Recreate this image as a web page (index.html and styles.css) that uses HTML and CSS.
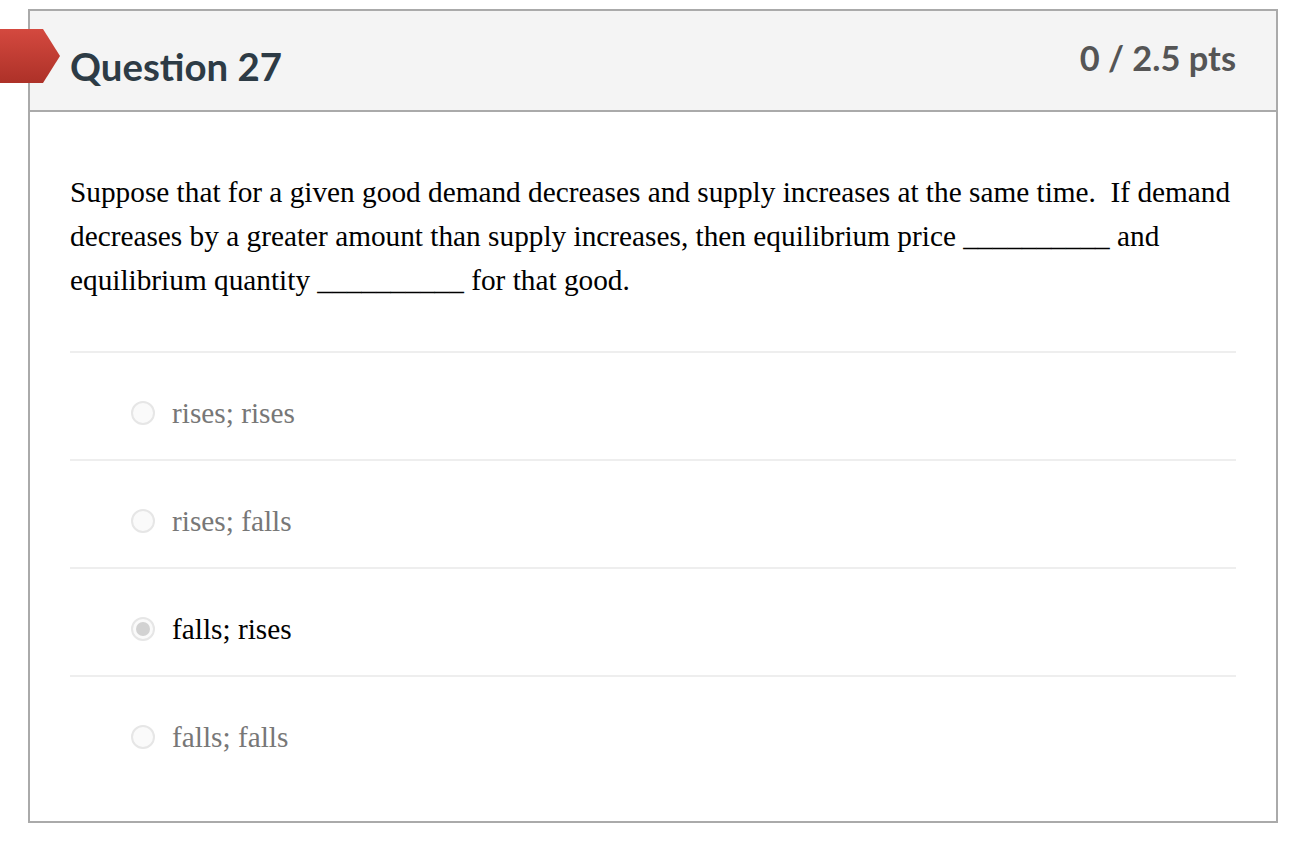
FILE: index.html
```html
<!DOCTYPE html>
<html>
<head>
<meta charset="utf-8">
<link rel="stylesheet" href="styles.css">
</head>
<body>
<div class="page">
  <svg class="flag" width="62" height="54" viewBox="0 0 62 54">
    <defs>
      <linearGradient id="fg" x1="0" y1="0" x2="0" y2="1">
        <stop offset="0" stop-color="#d4493f"/>
        <stop offset="1" stop-color="#ad3128"/>
      </linearGradient>
    </defs>
    <polygon points="0,0 43,0 60,27 43,54 0,54" fill="url(#fg)"/>
  </svg>
  <div class="question">
    <div class="q-header">
      <h2 class="q-title">Question 27</h2>
      <div class="q-pts">0 / 2.5 pts</div>
    </div>
    <div class="q-body">
      <p class="q-text">Suppose that for a given good demand decreases and supply increases at the same time.&nbsp; If demand decreases by a greater amount than supply increases, then equilibrium price __________ and equilibrium quantity __________ for that good.</p>
      <div class="answers">
        <div class="answer"><span class="radio"></span><span class="label">rises; rises</span></div>
        <div class="answer"><span class="radio"></span><span class="label">rises; falls</span></div>
        <div class="answer selected"><span class="radio"></span><span class="label">falls; rises</span></div>
        <div class="answer"><span class="radio"></span><span class="label">falls; falls</span></div>
      </div>
    </div>
  </div>
</div>
</body>
</html>
```
FILE: styles.css
```css
html, body {
  margin: 0;
  padding: 0;
  background: #ffffff;
}
.page {
  position: relative;
  padding: 9px 16px 0 28px;
  width: 1250px;
}
.flag {
  position: absolute;
  left: 0;
  top: 29px;
  display: block;
}
.question {
  border: 2px solid #aaaaaa;
  background: #fff;
}
.q-header {
  background: #f4f4f4;
  border-bottom: 2px solid #aaaaaa;
  height: 99px;
  display: flex;
  justify-content: space-between;
  align-items: flex-start;
  padding: 0 40px;
  font-family: Lato, "Open Sans", sans-serif;
  font-weight: bold;
}
.q-title {
  margin: 0;
  margin-top: 33px;
  font-size: 38.4px;
  line-height: 44px;
  color: #2d3b45;
  font-weight: bold;
}
.q-pts {
  margin-top: 27px;
  font-size: 34.4px;
  line-height: 40px;
  color: #555555;
}
.q-body {
  padding: 58px 40px 38px 40px;
}
.q-text {
  margin: 0 0 49px 0;
  font-family: "Liberation Serif", "Times New Roman", serif;
  font-size: 29.3px;
  line-height: 44px;
  color: #000;
}
.answers {
  display: flex;
  flex-direction: column;
}
.answer {
  border-top: 2px solid #eeeeee;
  display: flex;
  align-items: center;
  padding-left: 61px;
  padding-top: 14px;
  box-sizing: border-box;
  height: 108px;
}
.radio {
  width: 20px;
  height: 20px;
  border-radius: 50%;
  border: 2px solid #e6e6e6;
  background: #fafafa;
  margin-right: 17px;
  display: flex;
  align-items: center;
  justify-content: center;
  flex: none;
}
.answer.selected .radio::after {
  content: "";
  width: 14px;
  height: 14px;
  border-radius: 50%;
  background: #d2d2d2;
}
.label {
  font-family: "Liberation Serif", "Times New Roman", serif;
  font-size: 29.3px;
  line-height: 32px;
  color: #777777;
}
.answer.selected .label {
  color: #000;
}
```
